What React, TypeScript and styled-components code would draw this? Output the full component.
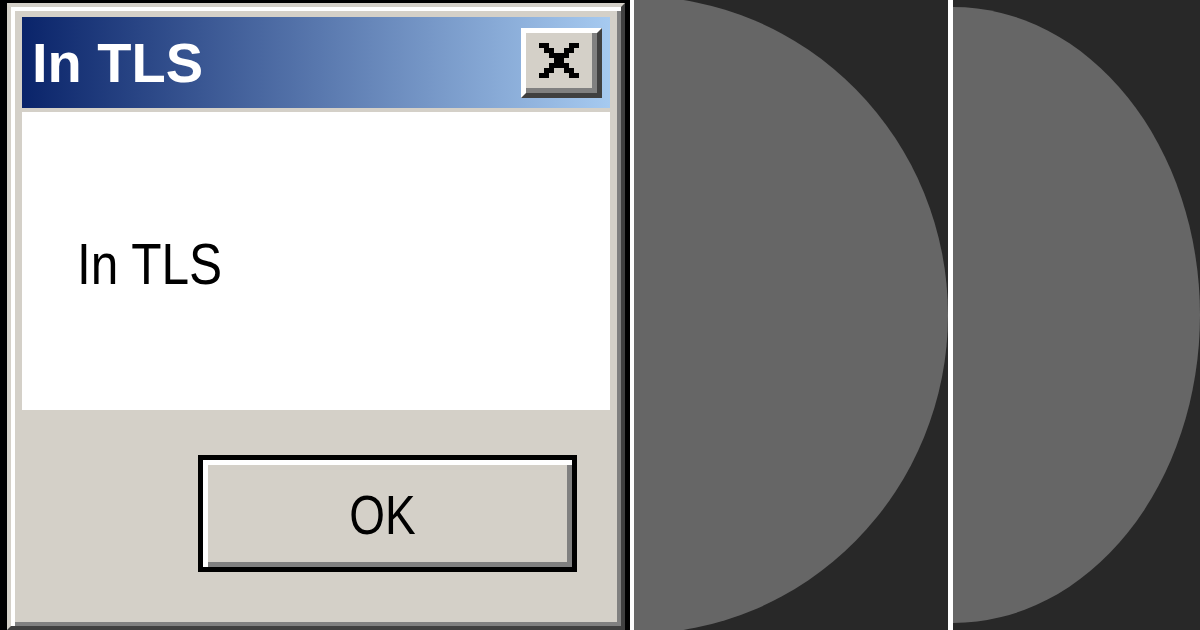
import React from "react";
import styled, { createGlobalStyle } from "styled-components";

const GlobalStyle = createGlobalStyle`
  html, body {
    margin: 0;
    padding: 0;
    background: #000;
  }
  body {
    font-family: "Liberation Sans", Arial, sans-serif;
  }
  * {
    box-sizing: border-box;
  }
`;

const Screen = styled.div`
  display: flex;
  width: 1200px;
  height: 630px;
  overflow: hidden;
  background: #000;
`;

const DialogArea = styled.div`
  width: 630px;
  height: 630px;
  flex: none;
  background: #000;
  padding: 3px 0 0 7px;
`;

const Divider = styled.div<{ $w: number }>`
  width: ${(p) => p.$w}px;
  flex: none;
  background: #ffffff;
`;

const Window = styled.div`
  width: 618px;
  height: 627px;
  display: flex;
  flex-direction: column;
  background: #d4d0c8;
  border: 4px solid;
  border-color: #d4d0c8 #404040 #404040 #d4d0c8;
  box-shadow: inset 4px 4px #ffffff, inset -4px -4px #808080;
  padding: 10px 11px 0 11px;
`;

const TitleBar = styled.div`
  height: 91px;
  flex: none;
  display: flex;
  align-items: center;
  justify-content: space-between;
  padding: 0 8px 0 10px;
  background: linear-gradient(to right, #0a246a 0%, #a6caf0 100%);
`;

const TitleText = styled.span`
  color: #ffffff;
  font-family: "Liberation Sans", Arial, sans-serif;
  font-weight: 700;
  font-size: 56px;
  line-height: 1;
`;

const CloseButton = styled.div`
  width: 81px;
  height: 70px;
  display: flex;
  align-items: center;
  justify-content: center;
  background: #d4d0c8;
  border: 5px solid;
  border-color: #ffffff #404040 #404040 #ffffff;
  box-shadow: inset -5px -5px #808080;
  padding: 0 5px 5px 0;
`;

const Content = styled.div`
  height: 298px;
  flex: none;
  margin-top: 4px;
  background: #ffffff;
  display: flex;
  align-items: center;
  padding: 6px 0 0 55px;
`;

const Message = styled.span`
  display: inline-block;
  color: #000;
  font-family: "Liberation Sans", Arial, sans-serif;
  font-size: 57px;
  line-height: 1;
  transform: scaleX(0.87);
  transform-origin: left center;
`;

const Footer = styled.div`
  flex: 1;
  display: flex;
  justify-content: flex-end;
  align-items: flex-start;
  padding: 45px 33px 0 0;
`;

const OkButton = styled.div`
  width: 379px;
  height: 117px;
  display: flex;
  align-items: center;
  justify-content: center;
  background: #d4d0c8;
  border: 5px solid #000;
  box-shadow: inset 5px 5px #ffffff, inset -5px -5px #808080;
`;

const OkLabel = styled.span`
  display: inline-block;
  color: #000;
  font-family: "Liberation Sans", Arial, sans-serif;
  font-size: 56px;
  line-height: 1;
  transform: scaleX(0.82);
  margin: 2px 10px 0 0;
`;

const Panel = styled.div<{ $w: number }>`
  width: ${(p) => p.$w}px;
  flex: none;
  height: 630px;
  background: #282828;
  display: flex;
  align-items: center;
  overflow: hidden;
`;

const HalfDisc = styled.div<{ $h: number }>`
  width: 100%;
  height: ${(p) => p.$h}px;
  flex: none;
  background: #666666;
  border-radius: 0 100% 100% 0 / 0 50% 50% 0;
`;

// classic 8x7 close glyph, one rect per pixel
const closeGlyph = [
  "11....11",
  ".11..11.",
  "..1111..",
  "...11...",
  "..1111..",
  ".11..11.",
  "11....11",
];

const CloseGlyph = () => (
  <svg width="40" height="35" viewBox="0 0 8 7" shapeRendering="crispEdges">
    {closeGlyph.map((row, y) =>
      row.split("").map((c, x) =>
        c === "1" ? <rect key={x + "-" + y} x={x} y={y} width="1" height="1" fill="#000" /> : null
      )
    )}
  </svg>
);

export default function App() {
  return (
    <>
      <GlobalStyle />
      <Screen>
        <DialogArea>
          <Window>
            <TitleBar>
              <TitleText>In TLS</TitleText>
              <CloseButton>
                <CloseGlyph />
              </CloseButton>
            </TitleBar>
            <Content>
              <Message>In TLS</Message>
            </Content>
            <Footer>
              <OkButton>
                <OkLabel>OK</OkLabel>
              </OkButton>
            </Footer>
          </Window>
        </DialogArea>
        <Divider $w={4} />
        <Panel $w={314}>
          <HalfDisc $h={638} />
        </Panel>
        <Divider $w={5} />
        <Panel $w={247}>
          <HalfDisc $h={616} />
        </Panel>
      </Screen>
    </>
  );
}
